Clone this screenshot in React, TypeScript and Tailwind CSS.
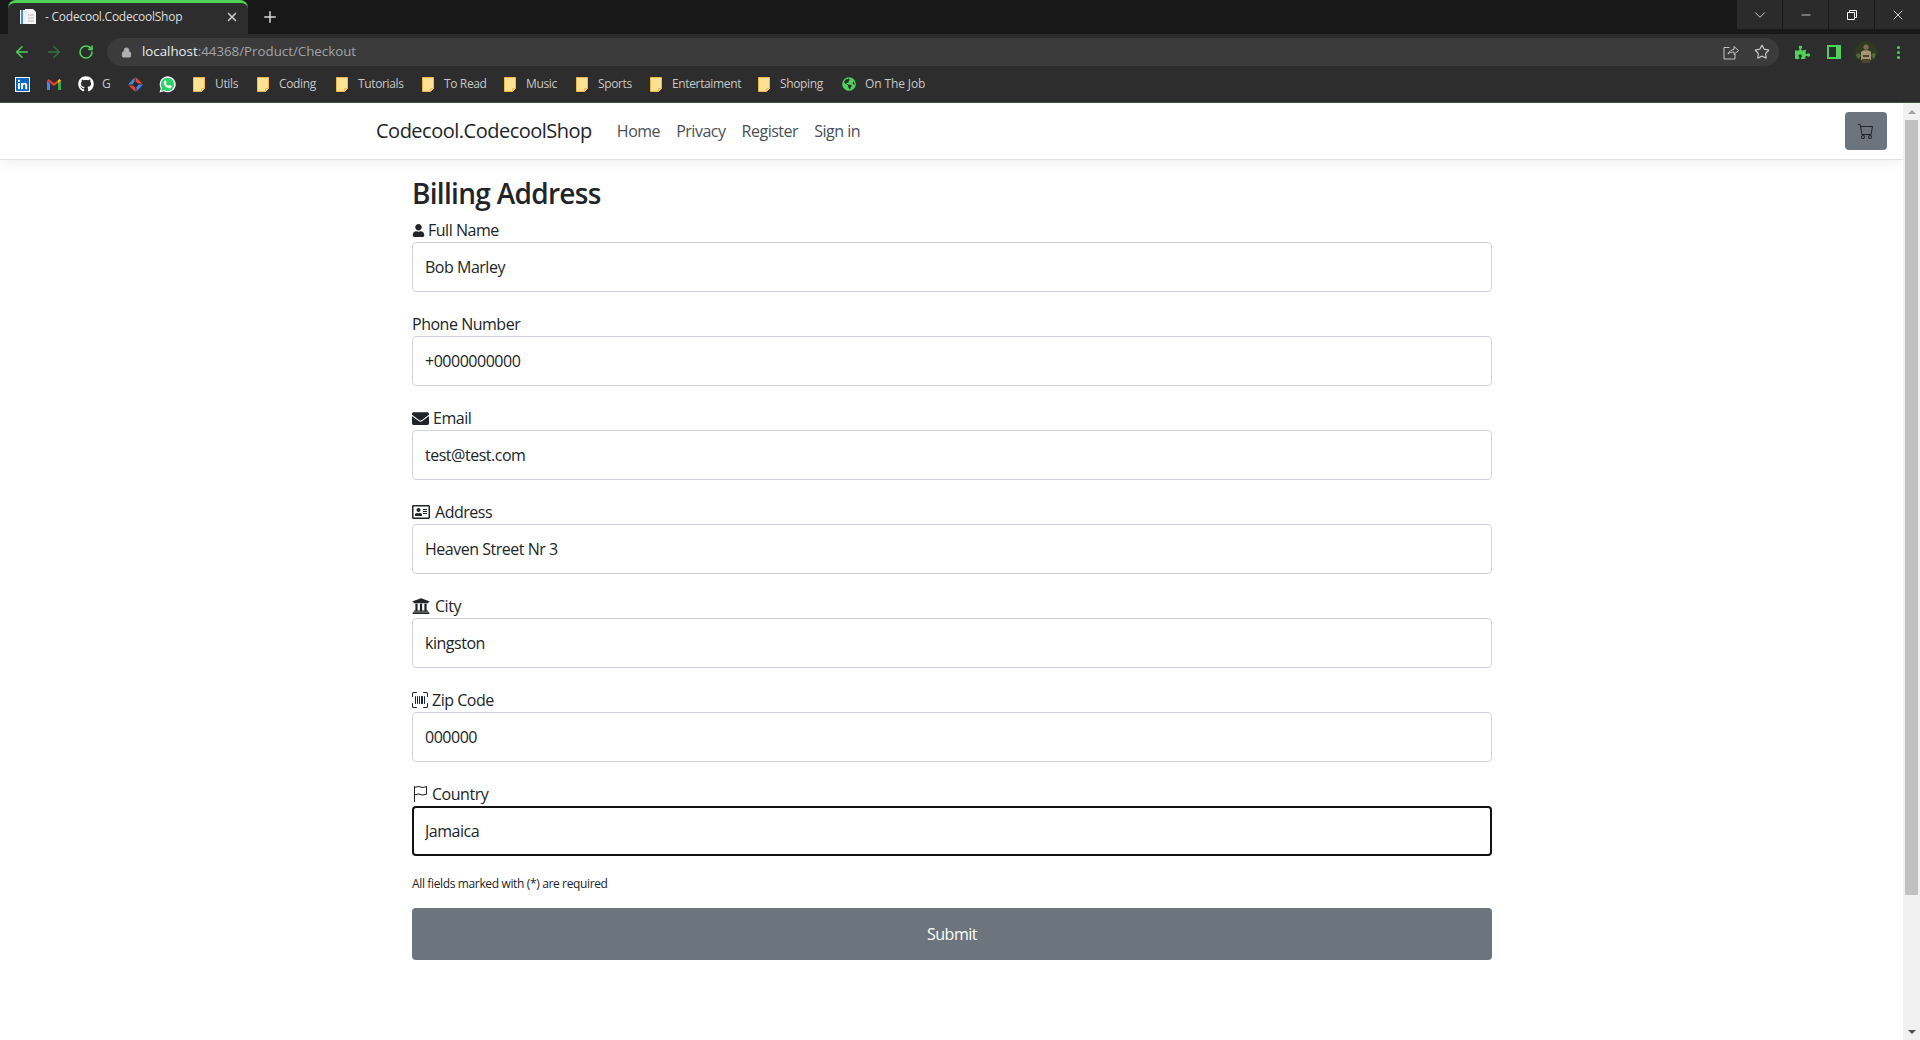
import { ArrowLeft, ArrowRight, RotateCw, Lock, X, Plus, ChevronDown, Minus, Star } from "lucide-react";
import { FaUser, FaEnvelope, FaRegAddressCard, FaUniversity, FaGithub, FaLinkedin, FaPuzzlePiece, FaGlobeAmericas } from "react-icons/fa";
import { BsUpcScan, BsFlag, BsCart } from "react-icons/bs";
import type { ReactNode } from "react";

const Folder = () => (
  <svg width="12" height="15" viewBox="0 0 12 15" className="shrink-0">
    <path d="M0.5 0.5H11.5V11.5L8.5 14.5H0.5Z" fill="#fde293" stroke="#f2b94a" />
    <path d="M8.5 14.5V11.5H11.5" fill="#f9d77e" stroke="#f2b94a" />
  </svg>
);

const Gmail = () => (
  <svg width="14" height="11" viewBox="0 0 14 11">
    <path d="M0 1.5V11H3V4.5Z" fill="#4285f4" />
    <path d="M14 1.5V11H11V4.5Z" fill="#34a853" />
    <path d="M0 1.5 7 7 14 1.5 12.5 0 7 4.2 1.5 0Z" fill="#ea4335" />
    <path d="M11 4.5 14 1.5 12.5 0 11 1.2Z" fill="#fbbc04" />
  </svg>
);

const FourColor = () => (
  <svg width="15" height="15" viewBox="0 0 15 15">
    <path d="M7.5 0 14.5 6.5H10.2L7.5 4.2Z" fill="#ea4335" />
    <path d="M15 7.5 8.5 14.5V10.2L10.8 7.5Z" fill="#4285f4" />
    <path d="M7.5 15 0.5 8.5H4.8L7.5 10.8Z" fill="#ea4335" />
    <path d="M0 7.5 6.5 0.5V4.8L4.2 7.5Z" fill="#3f8fe0" />
  </svg>
);

const Whatsapp = () => (
  <svg width="17" height="17" viewBox="0 0 17 17">
    <path d="M0.5 16.5 1.7 12.2A8 8 0 1 1 4.8 15.3Z" fill="#ffffff" />
    <path d="M2 15 2.9 11.9A6.6 6.6 0 1 1 5.1 14.1Z" fill="#25d366" />
    <path d="M6 4.6C5 5 4.4 6 4.8 7.4 5.4 9.6 7.4 11.6 9.6 12.2 11 12.6 12.2 12 12.5 11 12.7 10.4 12.6 10 12.2 9.8L10.6 9C10.2 8.8 9.9 9 9.6 9.5 9.4 9.8 9.1 9.8 8.8 9.6 8 9.2 7.4 8.5 7 7.8 6.9 7.5 7 7.3 7.2 7.1 7.6 6.7 7.6 6.5 7.5 6.2L7 4.9C6.8 4.5 6.4 4.4 6 4.6Z" fill="#ffffff" />
  </svg>
);

const Tab = () => (
  <div className="ml-2 flex h-[34px] w-[240px] items-center rounded-t-lg border-t-[3px] border-[#4fd15a] bg-[#2d2d2d] pb-[3px] pl-3">
    <svg width="16" height="16" viewBox="0 0 16 16" className="shrink-0">
      <path d="M0 1H6V15H0Z" fill="#e8f0f8" />
      <path d="M1 1H3V15H1Z" fill="#4a90d0" />
      <path d="M5 0H13L16 3V15H5Z" fill="#f4f4f4" />
      <path d="M8 6H14M8 9H14M8 12H14" stroke="#b8b8b8" />
    </svg>
    <span className="ml-[9px] w-[180px] whitespace-nowrap text-xs tracking-[-0.02em] text-[#dedede]">- Codecool.CodecoolShop</span>
    <X size={14} strokeWidth={2.5} className="text-[#d0d0d0]" />
  </div>
);

const WindowButton = ({ children }: { children: ReactNode }) => (
  <div className="flex h-[29px] w-[45px] items-center justify-center bg-[#2b2b2b] text-white">{children}</div>
);

const Bookmark = ({ width, label }: { width: string; label: string }) => (
  <div className={`flex items-center gap-[10px] ${width}`}>
    <Folder />
    <span className="whitespace-nowrap">{label}</span>
  </div>
);

const Browser = () => (
  <div className="h-[103px] shrink-0 border-b border-[#3b5a3b] bg-[#2d2d2d] tracking-normal">
    <div className="flex h-[34px] justify-between bg-[#181818]">
      <div className="flex">
        <Tab />
        <Plus size={18} className="ml-[13px] mt-2 text-[#d8d8d8]" />
      </div>
      <div className="flex gap-px">
        <WindowButton><ChevronDown size={18} strokeWidth={1} /></WindowButton>
        <WindowButton><Minus size={14} strokeWidth={1.2} /></WindowButton>
        <WindowButton>
          <svg width="10" height="10" viewBox="0 0 10 10" fill="none" stroke="currentColor">
            <path d="M0.5 2.5H7.5V9.5H0.5Z" />
            <path d="M2.5 2.5V0.5H9.5V7.5H7.5" />
          </svg>
        </WindowButton>
        <WindowButton><X size={16} strokeWidth={1.2} /></WindowButton>
      </div>
    </div>
    <div className="flex h-[34px] items-center pt-[2px]">
      <ArrowLeft size={18} className="ml-[13px] text-[#4fd15a]" />
      <ArrowRight size={18} className="ml-[14px] text-[#38703f]" />
      <RotateCw size={16} strokeWidth={2.4} className="ml-[15px] text-[#4fd15a]" />
      <div className="ml-[13px] flex h-[28px] w-[1672px] items-center rounded-full bg-[#3b3b3b] pl-[14px] pr-[9px] text-[13.3px]">
        <Lock size={11} className="fill-[#b0b0b0] text-[#b0b0b0]" />
        <span className="ml-[10px] text-[#e8eaed]">localhost</span>
        <span className="text-[#a0a4a8]">:44368/Product/Checkout</span>
        <svg width="16" height="16" viewBox="0 0 16 16" fill="none" stroke="#c4c4c4" className="ml-auto">
          <path d="M6.5 3.5H1V15H12V10" />
          <path d="M5 10C6 7 9 5.5 11 5.5V2.5L15.5 6.5 11 10.5V8C9 8 6.5 8.5 5 10Z" />
        </svg>
        <Star size={16} strokeWidth={1.8} className="ml-[15px] text-[#c4c4c4]" />
      </div>
      <FaPuzzlePiece size={15} className="ml-[16px] text-[#4fd15a]" />
      <div className="ml-[17px] h-[14px] w-[14px] border-2 border-r-[5px] border-[#4fd15a]" />
      <svg width="22" height="22" viewBox="0 0 22 22" className="ml-[14px]">
        <circle cx="11" cy="11" r="11" fill="#2f3a20" />
        <path d="M1 14C3 11 5 12 6 15L3 18ZM21 13C19 11 17 12 16 15L19 18Z" fill="#55683a" />
        <circle cx="11" cy="6" r="2.6" fill="#8a6a50" />
        <path d="M6 19V11C7 8.5 15 8.5 16 11V19Z" fill="#a39576" />
        <path d="M8 14H14V16H8ZM7 18H15V22H7Z" fill="#4c4432" />
      </svg>
      <div className="ml-[20px] flex flex-col gap-[2px]">
        <div className="h-[3px] w-[3px] rounded-full bg-[#4fd15a]" />
        <div className="h-[3px] w-[3px] rounded-full bg-[#4fd15a]" />
        <div className="h-[3px] w-[3px] rounded-full bg-[#4fd15a]" />
      </div>
    </div>
    <div className="flex h-[34px] items-center pb-[2px] pl-[15px] text-xs tracking-[-0.03em] text-[#c8c8c8]">
      <div className="flex w-[32px] items-center"><FaLinkedin size={15} className="bg-white text-[#0a66c2]" /></div>
      <div className="flex w-[31px] items-center"><Gmail /></div>
      <div className="flex w-[50px] items-center gap-[8px]"><FaGithub size={16} className="text-white" /><span>G</span></div>
      <div className="flex w-[31px] items-center"><FourColor /></div>
      <div className="flex w-[34px] items-center"><Whatsapp /></div>
      <Bookmark width="w-[64px]" label="Utils" />
      <Bookmark width="w-[79px]" label="Coding" />
      <Bookmark width="w-[86px]" label="Tutorials" />
      <Bookmark width="w-[82px]" label="To Read" />
      <Bookmark width="w-[72px]" label="Music" />
      <Bookmark width="w-[74px]" label="Sports" />
      <Bookmark width="w-[108px]" label="Entertaiment" />
      <Bookmark width="w-[84px]" label="Shoping" />
      <div className="flex items-center gap-[9px]">
        <FaGlobeAmericas size={14} className="text-[#4fd15a]" />
        <span className="tracking-[-0.01em]">On The Job</span>
      </div>
    </div>
  </div>
);

const NavBar = () => (
  <nav className="flex h-[57px] shrink-0 items-center border-b border-[#dee2e6] bg-white pl-[376px] pr-4 shadow-[0_4px_12px_rgba(0,0,0,0.05)]">
    <span className="text-xl tracking-[-0.025em] text-[#212529]">Codecool.CodecoolShop</span>
    <div className="ml-[25px] flex gap-4 text-[#495057]">
      <span>Home</span>
      <span>Privacy</span>
      <span>Register</span>
      <span>Sign in</span>
    </div>
    <button className="ml-auto flex h-[38px] w-[42px] items-center justify-center rounded bg-[#6c757d] text-[#212529]">
      <BsCart size={16} />
    </button>
  </nav>
);

const Field = ({ icon, label, value, focused }: { icon?: ReactNode; label: string; value: string; focused?: boolean }) => (
  <div className="mb-5">
    <label className="flex h-6 items-center text-[#212529]">
      {icon}
      {label}
    </label>
    <input
      readOnly
      value={value}
      className={
        focused
          ? "block h-[50px] w-full rounded border-2 border-[#111111] bg-white px-[11px] tracking-[-0.03em] text-[#212529] outline-none"
          : "block h-[50px] w-full rounded border border-[#ced4da] bg-white px-3 tracking-[-0.03em] text-[#212529] outline-none"
      }
    />
  </div>
);

const Form = () => (
  <main className="ml-[412px] w-[1080px] pt-4">
    <h3 className="mb-2 text-[28px] font-semibold leading-[34px] tracking-[-0.025em] text-[#212529]">Billing Address</h3>
    <Field icon={<FaUser size={13} className="mr-[3px]" />} label="Full Name" value="Bob Marley" />
    <Field label="Phone Number" value="+0000000000" />
    <Field icon={<FaEnvelope size={17} className="mr-[4px]" />} label="Email" value="test@test.com" />
    <Field icon={<FaRegAddressCard size={18} className="mr-[5px]" />} label="Address" value="Heaven Street Nr 3" />
    <Field icon={<FaUniversity size={18} className="mr-[5px]" />} label="City" value="kingston" />
    <Field icon={<BsUpcScan size={16} className="mr-1" />} label="Zip Code" value="000000" />
    <Field icon={<BsFlag size={16} className="mr-1" />} label="Country" value="Jamaica" focused />
    <p className="mb-4 h-4 text-xs leading-4 tracking-[-0.03em] text-[#212529]">All fields marked with (*) are required</p>
    <button className="h-[52px] w-full rounded bg-[#6c757d] text-white">Submit</button>
  </main>
);

const ScrollBar = () => (
  <div className="flex w-[17px] shrink-0 flex-col items-center bg-[#f1f1f1]">
    <div className="flex h-[17px] items-center justify-center">
      <div className="h-0 w-0 border-x-[4px] border-b-[4px] border-x-transparent border-b-[#a3a3a3]" />
    </div>
    <div className="h-[775px] w-[13px] bg-[#c1c1c1]" />
    <div className="mt-auto flex h-[17px] items-center justify-center">
      <div className="h-0 w-0 border-x-[4px] border-t-[4px] border-x-transparent border-t-[#505050]" />
    </div>
  </div>
);

export default function App() {
  return (
    <div className="flex h-[1040px] flex-col overflow-hidden bg-white font-['Open_Sans',sans-serif] tracking-[-0.03em]">
      <Browser />
      <div className="flex min-h-0 flex-1">
        <div className="min-w-0 flex-1">
          <NavBar />
          <Form />
        </div>
        <ScrollBar />
      </div>
    </div>
  );
}
